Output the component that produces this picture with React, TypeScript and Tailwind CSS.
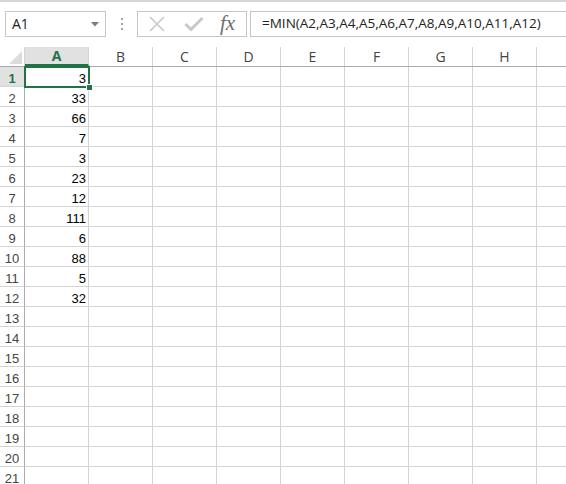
import React from 'react';

const columns = ['A', 'B', 'C', 'D', 'E', 'F', 'G', 'H', 'I'];
const values: (number | null)[] = [3, 33, 66, 7, 3, 23, 12, 111, 6, 88, 5, 32];
const rowCount = 21;

const uiFont = { fontFamily: '"Open Sans", "Noto Sans", sans-serif' };
const cellFont = { fontFamily: '"Liberation Sans", Arial, sans-serif' };

const FormulaBar: React.FC = () => (
    <div className="flex h-[26px] mt-[9px] pl-[5px]">
        <div className="w-[101px] border border-[#c6c6c6] flex items-center justify-between pl-[6px] pr-[6px]">
            <span className="text-[14px] text-[#222] leading-none" style={uiFont}>A1</span>
            <svg width="8" height="5" viewBox="0 0 8 5"><path d="M0 0 H8 L4 4.5 Z" fill="#7a7a7a" /></svg>
        </div>
        <div className="w-[31px] flex flex-col items-center justify-center gap-[3px]">
            <span className="w-[2px] h-[2px] bg-[#a6a6a6]" />
            <span className="w-[2px] h-[2px] bg-[#a6a6a6]" />
            <span className="w-[2px] h-[2px] bg-[#a6a6a6]" />
        </div>
        <div className="w-[110px] border border-[#c6c6c6] flex items-center">
            <svg className="ml-[10px]" width="18" height="18" viewBox="0 0 18 18">
                <path d="M2 2 L16 16 M16 2 L2 16" stroke="#c8c8c8" strokeWidth="1.6" fill="none" />
            </svg>
            <svg className="ml-[18px]" width="20" height="16" viewBox="0 0 20 16">
                <path d="M1.5 8 L7 13.5 L18.5 2" stroke="#c8c8c8" strokeWidth="3" fill="none" />
            </svg>
            <span
                className="ml-[16px] text-[21px] italic text-[#6e6e6e] leading-none -mt-[2px]"
                style={{ fontFamily: '"Liberation Serif", "Times New Roman", serif' }}
            >
                fx
            </span>
        </div>
        <div className="flex-1 ml-[3px] border border-r-0 border-[#c6c6c6] flex items-center pl-[11px]">
            <span className="text-[13.5px] text-[#222] whitespace-nowrap leading-none" style={uiFont}>
                =MIN(A2,A3,A4,A5,A6,A7,A8,A9,A10,A11,A12)
            </span>
        </div>
    </div>
);

const HeaderRow: React.FC = () => (
    <div className="flex h-[20px] border-b border-[#ababab]">
        <div className="w-[25px] shrink-0 border-r border-[#d4d4d4] relative">
            <svg className="absolute right-[2px] bottom-[2px]" width="13" height="13" viewBox="0 0 13 13">
                <path d="M13 0 V13 H0 Z" fill="#dcdcdc" />
            </svg>
        </div>
        {columns.map(col => {
            const active = col === 'A';
            return (
                <div
                    key={col}
                    className={`w-[64px] shrink-0 border-r border-[#d4d4d4] flex items-center justify-center text-[14px] ${
                        active ? 'bg-[#e1e1e1] text-[#217346] font-bold border-b-2 border-b-[#217346]' : 'text-[#444]'
                    }`}
                    style={uiFont}
                >
                    {col === 'I' ? '' : col}
                </div>
            );
        })}
    </div>
);

const GridRow: React.FC<{ index: number }> = ({ index }) => {
    const value = values[index - 1];
    const active = index === 1;
    return (
        <div className="flex h-[20px]">
            <div
                className={`w-[25px] shrink-0 border-r border-b border-[#ababab] border-b-[#d4d4d4] flex items-end justify-center text-[13px] leading-[15px] ${
                    active ? 'bg-[#e1e1e1] text-[#217346] font-bold' : 'text-[#444]'
                }`}
                style={cellFont}
            >
                {index}
            </div>
            {columns.map((col, i) => (
                <div
                    key={col}
                    className="w-[64px] shrink-0 border-r border-b border-[#d4d4d4] flex items-end justify-end pr-[2px] text-[13px] leading-[15px] text-black"
                    style={cellFont}
                >
                    {i === 0 && value !== null && value !== undefined ? value : ''}
                </div>
            ))}
        </div>
    );
};

const App: React.FC = () => {
    return (
        <div className="w-[566px] h-[484px] overflow-hidden bg-white border-t-2 border-[#d6d6d6] relative">
            <FormulaBar />
            <div className="h-[10px]" />
            <div className="relative">
                <HeaderRow />
                {Array.from({ length: rowCount }, (_, i) => (
                    <GridRow key={i + 1} index={i + 1} />
                ))}
                {/* selection outline over A1 */}
                <div className="absolute left-[24px] top-[19px] w-[66px] h-[22px] border-2 border-[#217346] pointer-events-none" />
                <div className="absolute left-[87px] top-[38px] w-[5px] h-[5px] bg-[#217346] border border-white box-content -translate-x-[1px] -translate-y-[1px]" />
            </div>
        </div>
    );
};

export default App;
